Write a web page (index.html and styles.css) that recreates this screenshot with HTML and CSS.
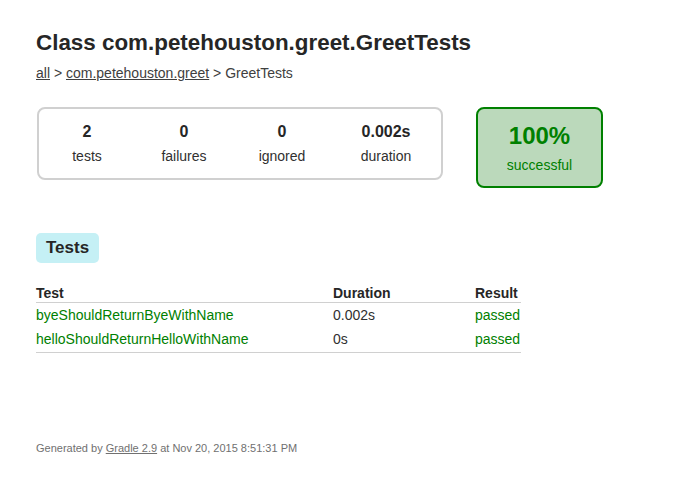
FILE: index.html
```html
<!DOCTYPE html>
<html>
<head>
<meta charset="utf-8">
<link rel="stylesheet" href="styles.css">
</head>
<body>
<div class="content">
  <h1 class="title">Class com.petehouston.greet.GreetTests</h1>
  <div class="breadcrumbs"><a href="#">all</a> &gt; <a href="#">com.petehouston.greet</a> &gt; GreetTests</div>
  <div class="summary">
    <div class="summary-group">
      <div class="info-box"><div class="counter">2</div><div class="label">tests</div></div>
      <div class="info-box"><div class="counter">0</div><div class="label">failures</div></div>
      <div class="info-box"><div class="counter">0</div><div class="label">ignored</div></div>
      <div class="info-box"><div class="counter">0.002s</div><div class="label">duration</div></div>
    </div>
    <div class="success-rate">
      <div class="percent">100%</div>
      <div class="label">successful</div>
    </div>
  </div>
  <div class="tab"><span class="tab-label">Tests</span></div>
  <table class="tests">
    <thead>
      <tr><th class="c-test">Test</th><th class="c-dur">Duration</th><th class="c-res">Result</th></tr>
    </thead>
    <tbody>
      <tr><td class="success">byeShouldReturnByeWithName</td><td>0.002s</td><td class="success">passed</td></tr>
      <tr><td class="success">helloShouldReturnHelloWithName</td><td>0s</td><td class="success">passed</td></tr>
    </tbody>
  </table>
  <div class="footer">Generated by <a href="#">Gradle 2.9</a> at Nov 20, 2015 8:51:31 PM</div>
</div>
</body>
</html>
```

FILE: styles.css
```css
html, body {
  margin: 0;
  padding: 0;
  background: #ffffff;
}
body {
  font-family: "Liberation Sans", Arial, sans-serif;
  font-size: 14px;
  color: #303030;
}
a {
  color: #303030;
}
.content {
  padding: 28px 36px;
}
.title {
  margin: 0;
  font-size: 22.4px;
  line-height: 30px;
  font-weight: bold;
  color: #262626;
}
.breadcrumbs {
  margin-top: 7px;
  font-size: 14px;
  line-height: 16px;
  color: #404040;
}
.breadcrumbs a {
  color: #404040;
}
.summary {
  display: flex;
  align-items: flex-start;
  margin-top: 26px;
  margin-left: 1px;
}
.summary-group {
  display: flex;
  width: 406px;
  height: 73px;
  box-sizing: border-box;
  border: 2px solid #d0d0d0;
  border-radius: 8px;
}
.info-box {
  width: 96px;
  padding-top: 13px;
  text-align: center;
}
.info-box:nth-child(2) { width: 98px; }
.info-box:nth-child(3) { width: 98px; }
.info-box:nth-child(4) { width: 110px; }
.counter {
  font-size: 16px;
  font-weight: bold;
  line-height: 20px;
  color: #262626;
}
.label {
  margin-top: 6px;
  font-size: 14px;
  line-height: 16px;
}
.success-rate {
  margin-left: 33px;
  width: 127px;
  height: 81px;
  box-sizing: border-box;
  border: 2px solid #008000;
  border-radius: 8px;
  background: #bbd9bb;
  text-align: center;
  padding-top: 13px;
  color: #008000;
}
.percent {
  font-size: 24px;
  font-weight: bold;
  line-height: 28px;
}
.success-rate .label {
  margin-top: 7px;
}
.tab {
  margin-top: 45px;
  height: 30px;
}
.tab-label {
  display: inline-block;
  background: #c5f0f5;
  border-radius: 5px;
  padding: 0 10px;
  height: 30px;
  line-height: 30px;
  font-size: 17px;
  font-weight: bold;
  color: #262626;
}
.tests {
  margin-top: 22px;
  border-collapse: collapse;
  width: 485px;
}
.tests th, .tests td {
  text-align: left;
  padding: 0;
  white-space: nowrap;
  font-size: 14px;
  height: 24px;
  line-height: 16px;
}
.tests th {
  font-weight: bold;
  color: #262626;
  height: 17px;
  vertical-align: top;
}
.tests thead tr {
  border-bottom: 1px solid #d0d0d0;
}
.tests tbody tr:last-child td {
  height: 25px;
  vertical-align: top;
  padding-top: 4px;
  box-sizing: border-box;
}
.tests tbody tr:last-child {
  border-bottom: 1px solid #d0d0d0;
}
.c-test { width: 297px; }
.c-dur { width: 142px; }
.success {
  color: #008000;
}
.footer {
  margin-top: 88px;
  font-size: 11px;
  line-height: 14px;
  color: #707070;
}
.footer a {
  color: #707070;
}
```
